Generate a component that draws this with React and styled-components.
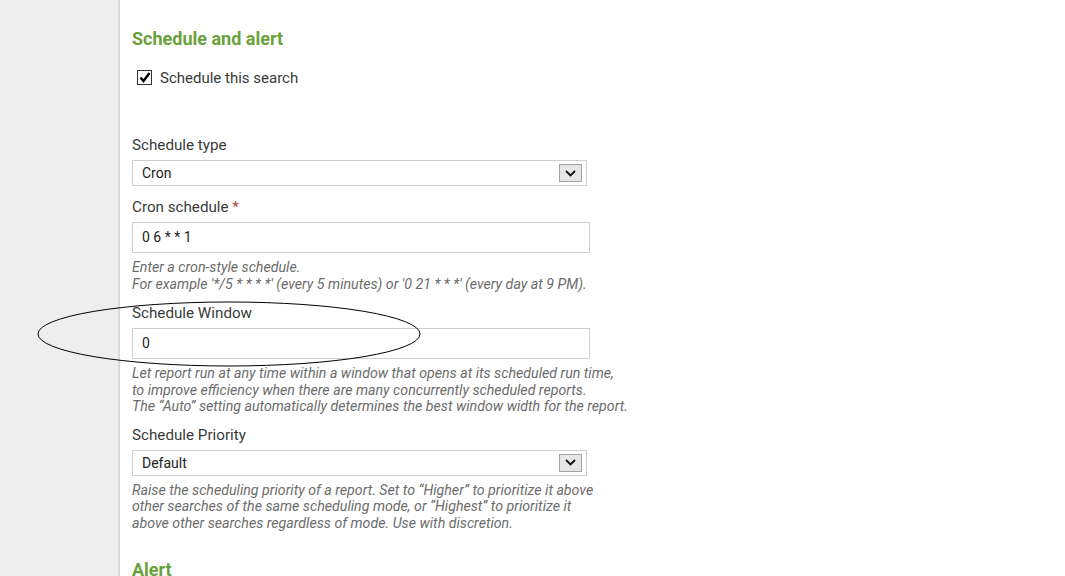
import styled, { createGlobalStyle } from "styled-components";

const GlobalStyle = createGlobalStyle`
  html, body {
    margin: 0;
    padding: 0;
    background: #ffffff;
  }
  body {
    font-family: Roboto, "Liberation Sans", Arial, sans-serif;
    color: #333333;
  }
`;

const Page = styled.div`
  position: relative;
  display: flex;
  width: 1065px;
  height: 576px;
  overflow: hidden;
`;

const Sidebar = styled.div`
  width: 118px;
  flex-shrink: 0;
  background: #eeeeee;
  border-right: 2px solid #d9d9d9;
`;

const Content = styled.div`
  flex: 1;
  padding: 28px 0 0 12px;
`;

const Heading = styled.h2`
  margin: 0 0 ${(props) => props.gap || 0}px;
  font-size: 18px;
  line-height: 22px;
  font-weight: 700;
  color: #6aa13a;
`;

const CheckRow = styled.label`
  display: flex;
  align-items: center;
  height: 20px;
  padding-left: 5px;
  margin-bottom: 48px;
  font-size: 15px;
  color: #3a3a3a;
`;

const CheckBox = styled.span`
  width: 13px;
  height: 13px;
  border: 1px solid #333;
  background: #fff;
  margin-right: 8px;
  display: flex;
  align-items: center;
  justify-content: center;
  margin-top: -2px;
`;

const Field = styled.div`
  margin-bottom: ${(props) => props.gap || 12}px;
`;

const Label = styled.div`
  font-size: 15.2px;
  line-height: 18px;
  margin-bottom: 6px;
  color: #3a3a3a;
`;

const Required = styled.span`
  color: #b0433d;
`;

const SelectBox = styled.div`
  box-sizing: border-box;
  width: 455px;
  height: 26px;
  border: 1px solid #cfcfcf;
  display: flex;
  align-items: center;
  justify-content: space-between;
  padding: 0 4px 0 9px;
  font-size: 14px;
  color: #222;
`;

const ArrowButton = styled.span`
  box-sizing: border-box;
  width: 23px;
  height: 18px;
  background: #e6e6e6;
  border: 1px solid #a3a3a3;
  display: flex;
  align-items: center;
  justify-content: center;
`;

const TextInput = styled.div`
  box-sizing: border-box;
  width: 458px;
  height: 31px;
  border: 1px solid #cfcfcf;
  display: flex;
  align-items: center;
  padding-left: 9px;
  padding-bottom: 1px;
  font-size: 14px;
  color: #222;
`;

const Help = styled.div`
  margin-top: 6px;
  font-size: 14.2px;
  line-height: 16.5px;
  font-style: italic;
  font-weight: 400;
  color: #6c6c6c;
  white-space: nowrap;
`;

const Annotation = styled.svg`
  position: absolute;
  left: 34px;
  top: 298px;
  pointer-events: none;
`;

const Chevron = () => (
  <svg width="11" height="7" viewBox="0 0 11 7">
    <path d="M1 1 L5.5 5.5 L10 1" fill="none" stroke="#111" strokeWidth="1.8" />
  </svg>
);

const Select = ({ value }) => (
  <SelectBox>
    <span>{value}</span>
    <ArrowButton>
      <Chevron />
    </ArrowButton>
  </SelectBox>
);

export default function App() {
  return (
    <>
      <GlobalStyle />
      <Page>
        <Sidebar />
        <Content>
          <Heading gap={18}>Schedule and alert</Heading>
          <CheckRow>
            <CheckBox>
              <svg width="12" height="11" viewBox="0 0 12 11">
                <path d="M1.5 5.5 L4.5 9 L10.5 1" fill="none" stroke="#000" strokeWidth="2.4" />
              </svg>
            </CheckBox>
            Schedule this search
          </CheckRow>

          <Field>
            <Label>Schedule type</Label>
            <Select value="Cron" />
          </Field>

          <Field>
            <Label>
              Cron schedule <Required>*</Required>
            </Label>
            <TextInput>0 6 * * 1</TextInput>
            <Help>
              Enter a cron-style schedule.
              <br />
              For example '*/5 * * * *' (every 5 minutes) or '0 21 * * *' (every day at 9 PM).
            </Help>
          </Field>

          <Field gap={11}>
            <Label>Schedule Window</Label>
            <TextInput>0</TextInput>
            <Help>
              Let report run at any time within a window that opens at its scheduled run time,
              <br />
              to improve efficiency when there are many concurrently scheduled reports.
              <br />
              The “Auto” setting automatically determines the best window width for the report.
            </Help>
          </Field>

          <Field gap={28}>
            <Label>Schedule Priority</Label>
            <Select value="Default" />
            <Help>
              Raise the scheduling priority of a report. Set to “Higher” to prioritize it above
              <br />
              other searches of the same scheduling mode, or “Highest” to prioritize it
              <br />
              above other searches regardless of mode. Use with discretion.
            </Help>
          </Field>

          <Heading>Alert</Heading>
        </Content>
        <Annotation width="392" height="74" viewBox="0 0 392 74">
          <ellipse cx="195" cy="36" rx="191" ry="32" fill="none" stroke="#000" strokeWidth="1" />
        </Annotation>
      </Page>
    </>
  );
}
